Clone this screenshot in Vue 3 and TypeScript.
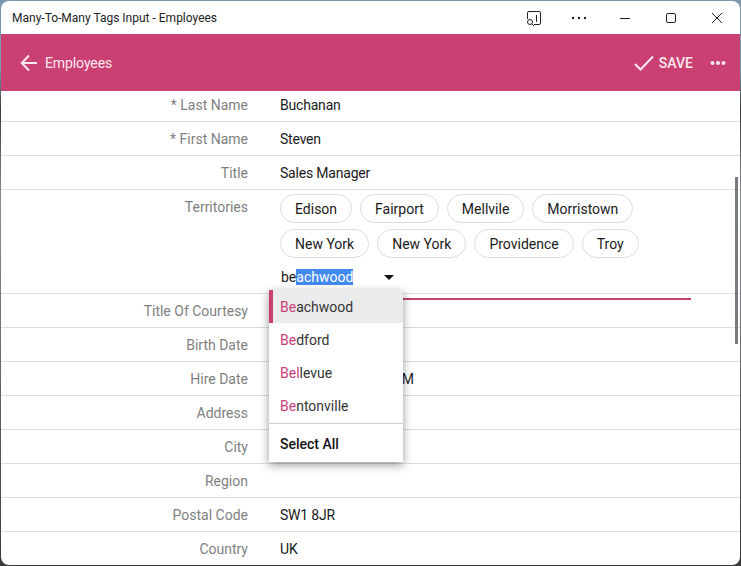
<script setup lang="ts">
const topRows = [
  { label: "* Last Name", value: "Buchanan" },
  { label: "* First Name", value: "Steven" },
  { label: "Title", value: "Sales Manager" },
];

// values that sit fully behind the popup are left empty
const bottomRows = [
  { label: "Title Of Courtesy", value: "" },
  { label: "Birth Date", value: "" },
  { label: "Hire Date", value: "10/17/1993 12:00 AM" },
  { label: "Address", value: "" },
  { label: "City", value: "" },
  { label: "Region", value: "" },
  { label: "Postal Code", value: "SW1 8JR" },
  { label: "Country", value: "UK" },
];

const tags = ["Edison", "Fairport", "Mellvile", "Morristown", "New York", "New York", "Providence", "Troy"];

const suggestions = [
  { match: "Be", rest: "achwood", active: true },
  { match: "Be", rest: "dford", active: false },
  { match: "Bel", rest: "levue", active: false },
  { match: "Be", rest: "ntonville", active: false },
];
</script>

<template>
  <div class="window">
    <div class="titlebar">
      <span class="window-title">Many-To-Many Tags Input - Employees</span>
      <div class="window-buttons">
        <svg class="caption-icon" width="46" height="16" viewBox="0 0 46 16" fill="none" stroke="#222" stroke-width="1">
          <path d="M17.500 9V3a1.500 1.500 0 0 1 1.500-1.500h10A1.500 1.500 0 0 1 30.500 3v10a1.500 1.500 0 0 1-1.500 1.500h-5" />
          <circle cx="20" cy="12" r="2.500" />
          <path d="M22 14l2 2M26.500 5v7" />
        </svg>
        <svg class="caption-icon" width="46" height="16" viewBox="0 0 46 16" fill="#222">
          <circle cx="17" cy="8" r="1.200" /><circle cx="23" cy="8" r="1.200" /><circle cx="29" cy="8" r="1.200" />
        </svg>
        <svg class="caption-icon" width="46" height="16" viewBox="0 0 46 16" fill="none" stroke="#222" stroke-width="1">
          <path d="M18 8.500h10" />
        </svg>
        <svg class="caption-icon" width="46" height="16" viewBox="0 0 46 16" fill="none" stroke="#222" stroke-width="1">
          <rect x="18.500" y="3.500" width="9" height="9" rx="1.500" />
        </svg>
        <svg class="caption-icon" width="46" height="16" viewBox="0 0 46 16" fill="none" stroke="#222" stroke-width="1">
          <path d="M18 3l10 10M28 3L18 13" />
        </svg>
      </div>
    </div>

    <header class="app-header">
      <svg width="18" height="18" viewBox="0 0 18 18" fill="none" stroke="#fbe9ef" stroke-width="2">
        <path d="M17 9H2M9 1.500L1.800 9 9 16.500" />
      </svg>
      <span class="back-label">Employees</span>
      <svg class="save-icon" width="20" height="16" viewBox="0 0 20 16" fill="none" stroke="#fbe9ef" stroke-width="2">
        <path d="M1 9l5.500 5.500L19 1.500" />
      </svg>
      <span class="save-label">SAVE</span>
      <svg class="more-icon" width="16" height="6" viewBox="0 0 16 6" fill="#fbe9ef">
        <circle cx="2.500" cy="3" r="2" /><circle cx="8" cy="3" r="2" /><circle cx="13.500" cy="3" r="2" />
      </svg>
    </header>

    <main class="form">
      <div v-for="row in topRows" :key="row.label" class="row">
        <label class="row-label">{{ row.label }}</label>
        <div class="row-value">{{ row.value }}</div>
      </div>

      <div class="row row-tags">
        <label class="row-label">Territories</label>
        <div class="tags-editor">
          <div class="tags">
            <span v-for="(tag, i) in tags" :key="i" class="tag">{{ tag }}</span>
          </div>
          <div class="tag-input">
            <div class="tag-text"><span>be</span><span class="selected">achwood</span></div>
            <span class="caret"></span>
          </div>
        </div>
      </div>

      <div v-for="row in bottomRows" :key="row.label" class="row">
        <label class="row-label">{{ row.label }}</label>
        <div class="row-value">{{ row.value }}</div>
      </div>

      <div class="focus-line"></div>

      <div class="popup">
        <div v-for="item in suggestions" :key="item.rest" class="popup-item" :class="{ active: item.active }">
          <span class="match">{{ item.match }}</span>{{ item.rest }}
        </div>
        <div class="popup-footer">Select All</div>
      </div>

      <div class="scrollbar"></div>
    </main>
  </div>
</template>

<style>
html,
body {
  margin: 0;
  height: 566px;
  background: linear-gradient(#7d98ad 0, #7d98ad 70px, #3b3b3b 110px, #8a8f94 200px, #3b3b3b 100%);
  overflow: hidden;
}
</style>

<style scoped>
.window {
  width: 739px;
  height: 564px;
  margin: 1px;
  display: flex;
  flex-direction: column;
  background: #fff;
  border-radius: 8px;
  overflow: hidden;
  font-family: Roboto, "Open Sans", sans-serif;
  font-size: 14px;
  color: #1a1a1a;
}

.titlebar {
  height: 33px;
  flex: none;
  display: flex;
  align-items: center;
  justify-content: space-between;
  padding-left: 11px;
}

.window-title {
  font-size: 12px;
  color: #222;
}

.window-buttons {
  display: flex;
  align-items: center;
}

.caption-icon {
  display: block;
}

.app-header {
  height: 57px;
  flex: none;
  display: flex;
  align-items: center;
  padding: 0 14px 0 19px;
  background: #cb4073;
  color: #fbe9ef;
}

.back-label {
  margin-left: 7px;
  font-size: 14px;
  letter-spacing: -0.1px;
}

.save-icon {
  margin-left: auto;
}

.save-label {
  margin-left: 5px;
  font-weight: 500;
  font-size: 14px;
}

.more-icon {
  margin-left: 17px;
}

.form {
  flex: 1;
  position: relative;
  overflow: hidden;
}

.row {
  display: flex;
  align-items: center;
  height: 34px;
  box-sizing: border-box;
  border-bottom: 1px solid #dcdcdc;
}

.row:first-child {
  margin-top: -3px;
}

.row-label {
  width: 247px;
  flex: none;
  text-align: right;
  color: #7f7f7f;
}

.row-value {
  margin-left: 32px;
  letter-spacing: -0.2px;
}

.row-tags {
  height: 104px;
  align-items: flex-start;
}

.row-tags .row-label {
  margin-top: 9px;
}

.tags-editor {
  margin-left: 32px;
  width: 380px;
  padding-top: 4px;
}

.tags {
  display: flex;
  flex-wrap: wrap;
  gap: 6px 8px;
}

.tag {
  height: 29px;
  box-sizing: border-box;
  display: flex;
  align-items: center;
  padding: 0 14px;
  border: 1px solid #dcdcdc;
  border-radius: 15px;
}

.tag-input {
  display: flex;
  align-items: center;
  height: 18px;
  margin-top: 10px;
  padding-left: 1px;
}

.tag-text {
  width: 103px;
}

.selected {
  background: #4289f1;
  color: #fff;
}

.caret {
  width: 0;
  height: 0;
  border-left: 5px solid transparent;
  border-right: 5px solid transparent;
  border-top: 5px solid #111;
}

.focus-line {
  position: absolute;
  left: 268px;
  top: 207px;
  width: 422px;
  height: 2px;
  background: #cb4073;
}

.popup {
  position: absolute;
  left: 268px;
  top: 199px;
  width: 134px;
  height: 172px;
  background: #fff;
  box-shadow: 0 3px 9px rgba(0, 0, 0, 0.4);
}

.popup-item {
  height: 33px;
  line-height: 35px;
  padding-left: 11px;
  color: #333;
}

.popup-item.active {
  background: #ebebeb;
  box-shadow: inset 4px 0 0 #cb4073;
}

.match {
  color: #c8407a;
}

.popup-footer {
  margin-top: 1px;
  height: 37px;
  line-height: 40px;
  padding-left: 11px;
  border-top: 1px solid #cfcfcf;
  font-weight: 500;
  color: #111;
}

.scrollbar {
  position: absolute;
  right: 2px;
  top: 86px;
  width: 3px;
  height: 167px;
  background: #7a7a7a;
}
</style>
